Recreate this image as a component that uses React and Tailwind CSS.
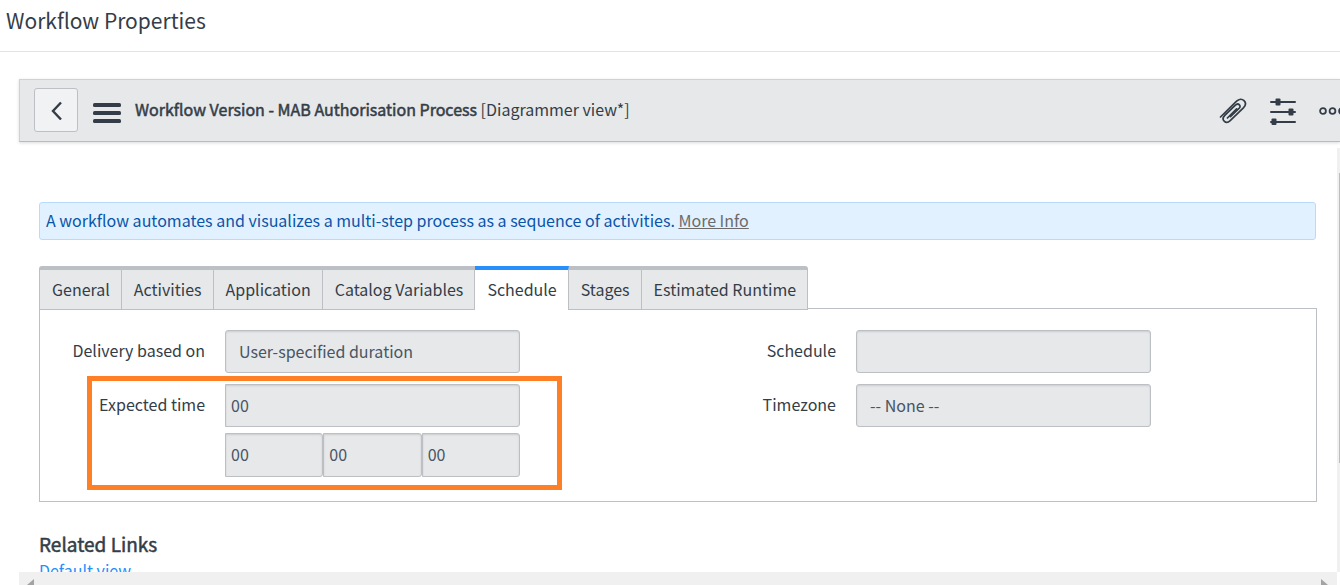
import { useState } from "react";

const TABS = ["General", "Activities", "Application", "Catalog Variables", "Schedule", "Stages", "Estimated Runtime"];

const FIELD =
  "block w-full appearance-none border border-[#bcbfc4] bg-[#e6e8ea] pb-0.5 text-[16px] leading-6 text-[#485563] opacity-100 shadow-[inset_0_1px_2px_rgba(0,0,0,0.12)]";

function Row({ id, label, children }) {
  return (
    <div className="flex items-start gap-5">
      <label htmlFor={id} className="w-[165px] shrink-0 pt-2 text-right leading-6">
        {label}
      </label>
      <div className="min-w-0 flex-1">{children}</div>
    </div>
  );
}

function Paperclip() {
  return (
    <svg width="28" height="28" viewBox="0 0 28 28" fill="none" stroke="#343d47" strokeWidth="1.7" strokeLinecap="round">
      <path d="M1.5 20 L17.6 4.2 C20 1.8 23 1.6 25 3.6 C27 5.6 26.8 8.4 24.4 10.8 L11.2 23.6 C9.2 25.6 6.8 25.8 5.2 24.2 C3.6 22.6 3.8 20.4 5.8 18.4 L16.4 8.2 C17.8 6.8 19.4 6.8 20.4 7.8 C21.4 8.8 21.2 10.2 20 11.4 L11.4 19.6" />
      <path d="M8.4 21 L17.6 11.8" />
    </svg>
  );
}

function Sliders() {
  return (
    <svg width="28" height="28" viewBox="0 0 28 28" fill="#343d47">
      <rect x="1" y="4" width="26" height="2" rx="1" />
      <rect x="1" y="14" width="26" height="2" rx="1" />
      <rect x="1" y="24" width="26" height="2" rx="1" />
      <rect x="6.5" y="1.5" width="5" height="7" rx="1" />
      <rect x="19.5" y="11.5" width="5" height="7" rx="1" />
      <rect x="2.5" y="21.5" width="5" height="6.5" rx="1" />
    </svg>
  );
}

export default function App() {
  const [active, setActive] = useState("Schedule");
  return (
    <div className="flex h-screen flex-col overflow-hidden bg-white font-['Noto_Sans_CJK_SC',sans-serif] text-[16px] text-[#343d47]">
      <h1 className="h-[52px] shrink-0 border-b border-[#e3e4e6] pl-1.5 pt-[5px] text-[21px] leading-[30px]">
        Workflow Properties
      </h1>

      <div className="ml-[19px] mt-[27px] flex min-h-0 flex-1 flex-col">
        <header className="z-10 flex h-[63px] shrink-0 items-center border border-r-0 border-[#cfd1d4] border-b-[#b8bbbf] bg-[#e6e8ea] pb-0.5 pl-3.5 shadow-[0_1px_3px_rgba(0,0,0,0.15)]">
          <button aria-label="Back" className="flex size-11 items-center justify-center rounded-[3px] border border-[#bcbfc4] bg-[#f1f2f4]">
            <svg width="14" height="20" viewBox="0 0 14 20" fill="none" stroke="#343d47" strokeWidth="2.4">
              <path d="M12 2.5 L4 11 L12 19.5" />
            </svg>
          </button>
          <button aria-label="Additional actions" className="ml-[15px] mt-1.5">
            <svg width="28" height="20" viewBox="0 0 28 20" fill="#343d47">
              <rect width="28" height="4" rx="1.5" />
              <rect y="8" width="28" height="4" rx="1.5" />
              <rect y="16" width="28" height="4" rx="1.5" />
            </svg>
          </button>
          <h2 className="ml-3.5 pb-0.5 leading-6">
            <span className="[-webkit-text-stroke:0.5px_#343d47]">Workflow Version - MAB Authorisation Process</span>{" "}
            [Diagrammer view*]
          </h2>
          <div className="ml-auto flex shrink-0 items-center pt-0.5">
            <button aria-label="Attachments" className="mr-[22px]"><Paperclip /></button>
            <button aria-label="Personalize form" className="mr-[22px]"><Sliders /></button>
            <button aria-label="More options" className="w-[21px] overflow-hidden">
              <svg width="30" height="8" viewBox="0 0 30 8" fill="none" stroke="#343d47" strokeWidth="1.8" className="max-w-none">
                <circle cx="4" cy="4" r="2.9" />
                <circle cx="13.5" cy="4" r="2.9" />
                <circle cx="23" cy="4" r="2.9" />
              </svg>
            </button>
          </div>
        </header>

        <div className="flex min-h-0 flex-1">
          <main className="min-w-0 flex-1 overflow-hidden px-5 pt-[60px]">
            <p className="mr-px h-[38px] rounded-[3px] border border-[#b9dbfb] bg-[#e2f1ff] px-1.5 py-[5px] leading-6 text-[#0b55a8]">
              A workflow automates and visualizes a multi-step process as a sequence of activities.{" "}
              <a href="#more-info" className="text-[#6b6b6b] underline">More Info</a>
            </p>

            <div role="tablist" className="relative mt-[26px] flex">
              {TABS.map((tab) => (
                <button
                  key={tab}
                  role="tab"
                  aria-selected={tab === active}
                  onClick={() => setActive(tab)}
                  className={
                    "h-11 border-t-4 border-r pb-0.5 pl-3 pr-[11px] leading-6 first:rounded-tl-[3px] first:border-l last:rounded-tr-[3px] " +
                    (tab === active
                      ? "border-t-[#278efc] border-r-[#bcbfc4] bg-white"
                      : "border-b border-[#bcbfc4] bg-[#e6e8ea]")
                  }
                >
                  {tab}
                </button>
              ))}
            </div>

            <section className="-mt-0.5 grid grid-cols-2 border border-[#bcbfc4] pb-6 pr-3.5 pt-[21px]">
              <div className="flex flex-col gap-[11px] pr-[151px]">
                <Row id="delivery" label="Delivery based on">
                  <select id="delivery" disabled className={FIELD + " h-[43px] rounded-[3px] px-[13px]"}>
                    <option>User-specified duration</option>
                  </select>
                </Row>
                <div className="relative">
                  <div className="pointer-events-none absolute -bottom-[13px] -right-[42px] -top-2 left-[47px] border-[5px] border-[#ff7f27]" />
                  <Row id="days" label="Expected time">
                    <input id="days" disabled defaultValue="00" className={FIELD + " h-[43px] rounded-r-[3px] px-[5px]"} />
                    <div className="mt-1.5 grid grid-cols-3">
                      <input aria-label="Hours" disabled defaultValue="00" className={FIELD + " h-11 rounded-r-[3px] px-[5px]"} />
                      <input aria-label="Minutes" disabled defaultValue="00" className={FIELD + " h-11 rounded-r-[3px] px-[5px]"} />
                      <input aria-label="Seconds" disabled defaultValue="00" className={FIELD + " h-11 rounded-r-[3px] px-[5px]"} />
                    </div>
                  </Row>
                </div>
              </div>
              <div className="flex flex-col gap-[11px] pr-[151px]">
                <Row id="schedule" label="Schedule">
                  <input id="schedule" disabled className={FIELD + " h-[43px] rounded-[3px] px-[13px]"} />
                </Row>
                <Row id="timezone" label="Timezone">
                  <select id="timezone" disabled className={FIELD + " h-[43px] rounded-[3px] px-[13px]"}>
                    <option>-- None --</option>
                  </select>
                </Row>
              </div>
            </section>

            <h3 className="mt-7 text-[19px] leading-7 [-webkit-text-stroke:0.5px_#343d47]">Related Links</h3>
            <a href="#default-view" className="block leading-6 text-[#278efc]">Default view</a>
          </main>
          <div className="mt-1.5 w-[3px] shrink-0 bg-[#f0f0f0] pl-0.5 pt-[25px]">
            <div className="h-[290px] bg-[#bdbdbd]" />
          </div>
        </div>

        <div className="mr-[3px] flex h-[13px] shrink-0 items-end justify-between bg-[#f0f0f0] pl-2 pr-[9px]">
          <svg width="7" height="6" viewBox="0 0 7 6" fill="#a3a3a3"><path d="M7 0 V6 H0 Z" /></svg>
          <svg width="7" height="6" viewBox="0 0 7 6" fill="#a3a3a3"><path d="M0 0 L7 6 H0 Z" /></svg>
        </div>
      </div>
    </div>
  );
}
